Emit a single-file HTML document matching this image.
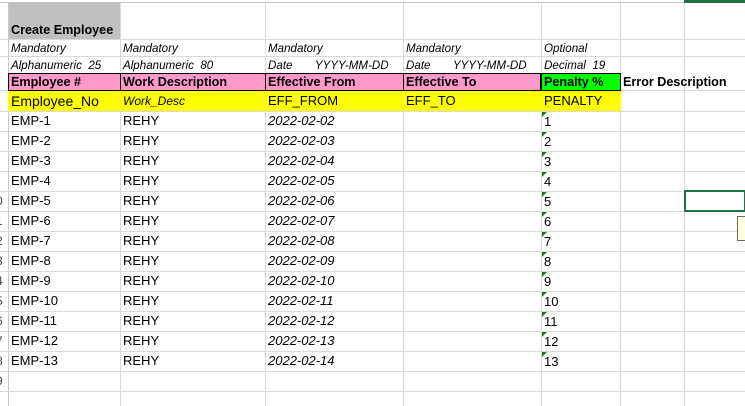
<!DOCTYPE html>
<html><head><style>
*{margin:0;padding:0;box-sizing:border-box}
body{width:745px;height:406px;overflow:hidden;background:#fff;font-family:"Liberation Sans",Arial,sans-serif;color:#000;position:relative}
.vl{position:absolute;top:3px;bottom:0;width:1px;background:#dadada}
.hl{position:absolute;left:0;right:0;height:1px;background:#dadada}
.t{position:absolute;white-space:nowrap;font-size:13px;line-height:20px}
.i{font-style:italic;font-size:11.6px;line-height:17px}
.b{font-weight:bold;font-size:12.6px;line-height:17px}
.tri{position:absolute;width:0;height:0;border-top:5px solid #1e7a1e;border-right:5px solid transparent}
.rn{position:absolute;left:-4px;font-size:12px;line-height:20px;color:#444}
</style></head><body>
<div style="position:absolute;left:0;top:0;width:745px;height:3px;background:#fff;border-bottom:1px solid #c8c8c8"></div>
<div style="position:absolute;left:684px;top:0;width:61px;height:3px;background:#217346"></div>
<div style="position:absolute;left:8px;top:3px;width:112px;height:37px;background:#c0c0c0"></div>
<div class="vl" style="left:8px;background:#c8c8c8"></div>
<div class="vl" style="left:120px"></div><div class="vl" style="left:265px"></div><div class="vl" style="left:403px"></div><div class="vl" style="left:541px"></div><div class="vl" style="left:620px"></div><div class="vl" style="left:684px"></div>
<div class="hl" style="top:39px"></div><div class="hl" style="top:56px"></div>
<div class="hl" style="top:90px"></div>
<div class="hl" style="top:111px"></div><div class="hl" style="top:131px"></div><div class="hl" style="top:151px"></div><div class="hl" style="top:171px"></div><div class="hl" style="top:191px"></div><div class="hl" style="top:211px"></div><div class="hl" style="top:231px"></div><div class="hl" style="top:251px"></div><div class="hl" style="top:271px"></div><div class="hl" style="top:291px"></div><div class="hl" style="top:311px"></div><div class="hl" style="top:331px"></div><div class="hl" style="top:351px"></div><div class="hl" style="top:371px"></div><div class="hl" style="top:391px"></div>
<div style="position:absolute;left:8px;top:73px;width:533px;height:18px;background:#ff99cc;border:1px solid #000"></div>
<div style="position:absolute;left:120px;top:73px;width:1px;height:18px;background:#000"></div>
<div style="position:absolute;left:265px;top:73px;width:1px;height:18px;background:#000"></div>
<div style="position:absolute;left:403px;top:73px;width:1px;height:18px;background:#000"></div>
<div style="position:absolute;left:541px;top:73px;width:80px;height:18px;background:#00ff00;border:1px solid #000"></div>
<div style="position:absolute;left:8px;top:91px;width:613px;height:20px;background:#ffff00"></div>
<div class="t b" style="left:11px;top:22px">Create Employee</div>
<div class="t i" style="left:11px;top:40px">Mandatory</div><div class="t i" style="left:123px;top:40px">Mandatory</div><div class="t i" style="left:268px;top:40px">Mandatory</div><div class="t i" style="left:406px;top:40px">Mandatory</div><div class="t i" style="left:544px;top:40px">Optional</div>
<div class="t i" style="left:11px;top:57px">Alphanumeric&nbsp; 25</div><div class="t i" style="left:123px;top:57px">Alphanumeric&nbsp; 80</div><div class="t i" style="left:268px;top:57px">Date&nbsp;&nbsp;&nbsp;&nbsp;&nbsp;&nbsp; YYYY-MM-DD</div><div class="t i" style="left:406px;top:57px">Date&nbsp;&nbsp;&nbsp;&nbsp;&nbsp;&nbsp; YYYY-MM-DD</div><div class="t i" style="left:544px;top:57px">Decimal&nbsp; 19</div>
<div class="t b" style="left:11px;top:74px">Employee #</div><div class="t b" style="left:123px;top:74px">Work Description</div><div class="t b" style="left:268px;top:74px">Effective From</div><div class="t b" style="left:406px;top:74px">Effective To</div><div class="t b" style="left:544px;top:74px">Penalty %</div><div class="t b" style="left:623px;top:74px">Error Description</div>
<div class="t" style="left:11px;top:91px;font-size:14px">Employee_No</div><div class="t" style="left:123px;top:91px;font-style:italic;font-size:12px">Work_Desc</div><div class="t" style="left:268px;top:91px">EFF_FROM</div><div class="t" style="left:406px;top:91px">EFF_TO</div><div class="t" style="left:544px;top:91px">PENALTY</div>
<div id="rows"></div>
<div style="position:absolute;left:684px;top:190px;width:62px;height:22px;border:2px solid #217346"></div>
<div style="position:absolute;left:737px;top:216px;width:10px;height:25px;background:#ffffe1;border:1px solid #666"></div>
<script>
var h='';for(var n=1;n<=13;n++){var y=111+(n-1)*20;var d=n+1;var ds='2022-02-'+(d<10?'0'+d:d);
h+='<div class="t" style="left:11px;top:'+y+'px">EMP-'+n+'</div><div class="t" style="left:123px;top:'+y+'px">REHY</div><div class="t" style="left:268px;top:'+y+'px;font-style:italic">'+ds+'</div><div class="tri" style="left:542px;top:'+(y+1)+'px"></div><div class="t" style="left:544px;top:'+(y+1)+'px">'+n+'</div>';}
var rn=[0,1,2,3,4,5,6,7,8,9];
for(var k=0;k<15;k++){var yy=191+(k-4)*20;if(k<4)continue;}
for(var r=0;r<10;r++){var y2=191+r*20;var lab=(r+10)%10;h+='<div class="rn" style="top:'+y2+'px">'+lab+'</div>';}
document.getElementById('rows').innerHTML=h;
</script>
</body></html>
